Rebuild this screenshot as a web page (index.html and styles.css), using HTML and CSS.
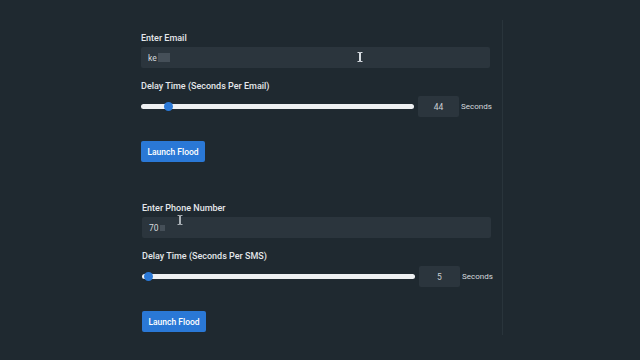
FILE: index.html
```html
<!DOCTYPE html>
<html>
<head>
<meta charset="utf-8">
<link rel="stylesheet" href="styles.css">
</head>
<body>
<div class="panel">
  <section class="form">
    <label class="label">Enter Email</label>
    <div class="input"><span class="typed">ke</span><span class="blur"></span>
      <svg class="ibeam ibeam-1" width="6" height="10" viewBox="0 0 6 10"><path d="M0.5 0.5h2v9h-2M5.5 0.5h-2v9h2M2.5 0.5h1M2.5 9.5h1" fill="none" stroke="#d8dde2" stroke-width="1"/></svg>
    </div>
    <label class="label gap">Delay Time (Seconds Per Email)</label>
    <div class="slider-row">
      <div class="track"><span class="thumb" style="left:8.6%"></span></div>
      <div class="num">44</div>
      <span class="unit">Seconds</span>
    </div>
    <button class="btn">Launch Flood</button>
  </section>
  <section class="form second">
    <label class="label">Enter Phone Number</label>
    <div class="input"><span class="typed">70</span><span class="blur small"></span>
      <svg class="ibeam ibeam-2" width="6" height="10" viewBox="0 0 6 10"><path d="M0.5 0.5h2v9h-2M5.5 0.5h-2v9h2M2.5 0.5h1M2.5 9.5h1" fill="none" stroke="#aab1b7" stroke-width="1"/></svg>
    </div>
    <label class="label gap">Delay Time (Seconds Per SMS)</label>
    <div class="slider-row">
      <div class="track"><span class="thumb" style="left:0.8%"></span></div>
      <div class="num">5</div>
      <span class="unit">Seconds</span>
    </div>
    <button class="btn">Launch Flood</button>
  </section>
</div>
</body>
</html>
```
FILE: styles.css
```css
html, body {
  margin: 0;
  padding: 0;
  background: #1f2930;
  height: 100%;
  font-family: Roboto, "Liberation Sans", sans-serif;
}
.panel {
  margin-left: 130px;
  margin-top: 20px;
  width: 350px;
  padding: 12px 11px 3px 11px;
  border-right: 1px solid #29343b;
}
.form {
  display: flex;
  flex-direction: column;
  align-items: flex-start;
}
.second {
  margin-top: 40px;
  padding-left: 1px;
}
.label {
  font-size: 9px;
  line-height: 12px;
  font-weight: 500;
  color: #e4e7ea;
  margin-bottom: 3px;
}
.label.gap {
  margin-top: 12px;
  margin-bottom: 4px;
}
.input {
  position: relative;
  box-sizing: border-box;
  width: 349px;
  height: 21px;
  background: #2b353d;
  border-radius: 2px;
  display: flex;
  align-items: center;
  padding-left: 7px;
  font-size: 8.5px;
  color: #d6dade;
}
.blur {
  display: inline-block;
  width: 12px;
  height: 9px;
  background: #56606a;
  opacity: 0.6;
  margin-left: 1px;
}
.blur.small {
  width: 5px;
  height: 6px;
}
.ibeam {
  position: absolute;
}
.ibeam-1 { left: 216px; top: 5px; }
.ibeam-2 { left: 35px; top: -2px; }
.slider-row {
  display: flex;
  align-items: center;
  width: 350px;
  height: 21px;
}
.track {
  position: relative;
  flex-shrink: 0;
  width: 273px;
  height: 5px;
  background: #eef0f2;
  border-radius: 3px;
}
.thumb {
  position: absolute;
  top: 50%;
  width: 9px;
  height: 9px;
  margin-top: -4.5px;
  border-radius: 50%;
  background: #2a78d6;
}
.num {
  flex-shrink: 0;
  margin-left: 4px;
  width: 41px;
  height: 21px;
  box-sizing: border-box;
  background: #2b353d;
  border-radius: 2px;
  color: #c9ced3;
  font-size: 8.5px;
  display: flex;
  align-items: center;
  justify-content: center;
}
.unit {
  flex-shrink: 0;
  margin-left: 2px;
  font-size: 8px;
  color: #d6dade;
}
.btn {
  margin-top: 24px;
  width: 64px;
  height: 21px;
  border: none;
  border-radius: 2px;
  background: #2a78d6;
  color: #ffffff;
  font-family: Roboto, "Liberation Sans", sans-serif;
  font-size: 8.5px;
  font-weight: 500;
  padding: 0;
}
```
